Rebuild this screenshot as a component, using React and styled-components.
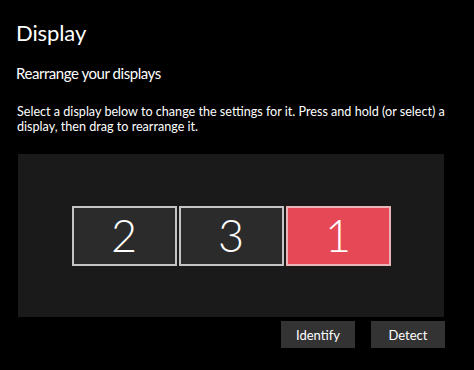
import React from "react";
import styled, { createGlobalStyle } from "styled-components";

const Global = createGlobalStyle`
  html, body { margin: 0; padding: 0; background: #000; }
  body { font-family: Lato, "Open Sans", sans-serif; color: #fff; }
`;

const Page = styled.div`
  width: 474px;
  height: 370px;
  box-sizing: border-box;
  padding: 18px 0 0 16px;
  background: #000;
  overflow: hidden;
`;

const Title = styled.h1`
  margin: 0;
  font-size: 22px;
  font-weight: 400;
  letter-spacing: -0.1px;
  line-height: 30px;
  color: #fff;
`;

const Subtitle = styled.h2`
  margin: 14px 0 0 0;
  font-size: 15px;
  font-weight: 400;
  letter-spacing: -0.45px;
  line-height: 22px;
  color: #fff;
`;

const Body = styled.p`
  margin: 20px 0 0 1px;
  width: 442px;
  font-size: 12.6px;
  line-height: 15px;
  color: #fff;
`;

const Canvas = styled.div`
  margin: 20px 0 0 2px;
  width: 426px;
  height: 163px;
  background: #1a1a1a;
  display: flex;
  align-items: center;
  justify-content: center;
  gap: 2px;
`;

const Tile = styled.div`
  box-sizing: border-box;
  width: 105px;
  height: 60px;
  border: 2px solid ${(p) => (p.$active ? "#e8b4b8" : "#c4c4c4")};
  background: ${(p) => (p.$active ? "#e74856" : "#2b2b2b")};
  display: flex;
  align-items: center;
  justify-content: center;
  font-size: 45px;
  font-weight: 300;
  color: #fff;
  line-height: 1;
`;

const Actions = styled.div`
  display: flex;
  justify-content: flex-end;
  gap: 16px;
  width: 429px;
  margin-top: 4px;
`;

const Button = styled.button`
  width: 74px;
  height: 27px;
  border: none;
  background: #333;
  color: #fff;
  font-family: Lato, "Open Sans", sans-serif;
  font-size: 13px;
  padding: 0;
`;

export default function App() {
  return (
    <Page>
      <Global />
      <Title>Display</Title>
      <Subtitle>Rearrange your displays</Subtitle>
      <Body>
        Select a display below to change the settings for it. Press and hold (or select) a display, then drag to rearrange it.
      </Body>
      <Canvas>
        <Tile>2</Tile>
        <Tile>3</Tile>
        <Tile $active>1</Tile>
      </Canvas>
      <Actions>
        <Button>Identify</Button>
        <Button>Detect</Button>
      </Actions>
    </Page>
  );
}
